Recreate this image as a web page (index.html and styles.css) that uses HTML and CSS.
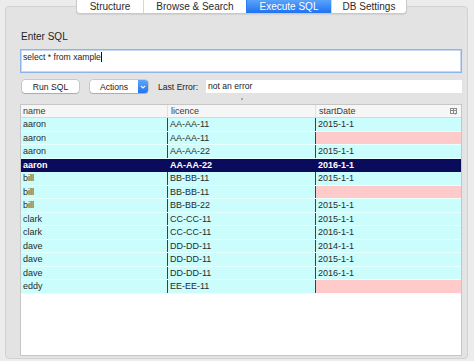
FILE: index.html
```html
<!DOCTYPE html>
<html>
<head>
<meta charset="utf-8">
<link rel="stylesheet" href="styles.css">
</head>
<body>
<div class="tabs">
  <div class="tab t1">Structure</div>
  <div class="tab t2">Browse &amp; Search</div>
  <div class="tab t3 active">Execute SQL</div>
  <div class="tab t4">DB Settings</div>
</div>
<div class="panel">
  <div class="label">Enter SQL</div>
  <div class="editor">select * from xample<span class="caret"></span></div>
  <div class="toolbar">
    <div class="btn run">Run SQL</div>
    <div class="popup"><span class="popup-text">Actions</span><span class="arrow"><svg width="6" height="4" viewBox="0 0 6 4"><path d="M0.8 0.8 L3 3 L5.2 0.8" fill="none" stroke="#fff" stroke-width="1.1"/></svg></span></div>
    <span class="err-label">Last Error:</span>
    <div class="err-field">not an error</div>
  </div>
  <div class="splitter"><span class="grip"></span></div>
  <div class="table">
    <div class="thead">
      <div class="th">name</div>
      <div class="th div">licence</div>
      <div class="th div last">startDate<svg class="colicon" width="7" height="7" viewBox="0 0 7 7"><rect x="0.5" y="0.5" width="6" height="5" fill="none" stroke="#8a8a8a"/><line x1="0.5" y1="2.5" x2="6.5" y2="2.5" stroke="#8a8a8a"/><line x1="3.5" y1="0.5" x2="3.5" y2="5.5" stroke="#8a8a8a"/><path d="M4 5 L5.5 6.8 L7 5 Z" fill="#8a8a8a"/></svg></div>
    </div>
    <div class="row"><div class="td">aaron</div><div class="td div">AA-AA-11</div><div class="td div">2015-1-1</div></div>
    <div class="row"><div class="td">aaron</div><div class="td div">AA-AA-11</div><div class="td div pink"></div></div>
    <div class="row"><div class="td">aaron</div><div class="td div">AA-AA-22</div><div class="td div">2015-1-1</div></div>
    <div class="row sel"><div class="td">aaron</div><div class="td">AA-AA-22</div><div class="td">2016-1-1</div></div>
    <div class="row"><div class="td">bill</div><div class="td div">BB-BB-11</div><div class="td div">2015-1-1</div></div>
    <div class="row"><div class="td">bill</div><div class="td div">BB-BB-11</div><div class="td div pink"></div></div>
    <div class="row"><div class="td">bill</div><div class="td div">BB-BB-22</div><div class="td div">2015-1-1</div></div>
    <div class="row"><div class="td">clark</div><div class="td div">CC-CC-11</div><div class="td div">2015-1-1</div></div>
    <div class="row"><div class="td">clark</div><div class="td div">CC-CC-11</div><div class="td div">2016-1-1</div></div>
    <div class="row"><div class="td">dave</div><div class="td div">DD-DD-11</div><div class="td div">2014-1-1</div></div>
    <div class="row"><div class="td">dave</div><div class="td div">DD-DD-11</div><div class="td div">2015-1-1</div></div>
    <div class="row"><div class="td">dave</div><div class="td div">DD-DD-11</div><div class="td div">2016-1-1</div></div>
    <div class="row"><div class="td">eddy</div><div class="td div">EE-EE-11</div><div class="td div pink"></div></div>
  </div>
</div>
</body>
</html>
```

FILE: styles.css
```css
html, body {
  margin: 0;
  padding: 0;
  width: 474px;
  height: 361px;
  overflow: hidden;
  background: #ececec;
  font-family: "Liberation Sans", Arial, sans-serif;
  color: #262626;
}

.tabs {
  position: relative;
  z-index: 1;
  display: flex;
  width: max-content;
  height: 13px;
  margin-left: 76px;
  background: #fff;
  border: 1px solid #c9c9c9;
  border-top: 0;
  border-radius: 0 0 4px 4px;
  box-shadow: 0 1px 1px rgba(0,0,0,0.08);
  overflow: hidden;
}

.tab {
  display: flex;
  align-items: center;
  justify-content: center;
  font-size: 10px;
  color: #2b2b2b;
  border-left: 1px solid #d6d6d6;
  box-sizing: border-box;
  padding-top: 0;
}
.t1 { width: 66px; border-left: 0; }
.t2 { width: 103px; }
.t3 { width: 85px; }
.t4 { width: 75px; }
.tab.active {
  background: linear-gradient(#5aa3f9, #1f72f2);
  color: #fff;
  border-left-color: #2c7af2;
}

.panel {
  box-sizing: border-box;
  height: 353px;
  margin: -8px 6px 0 5px;
  padding: 24px 5px 0 14px;
  background: #e3e3e3;
  border: 1px solid #d2d2d2;
  border-radius: 4px;
  display: flex;
  flex-direction: column;
}

.label {
  font-size: 10px;
  line-height: 12px;
  height: 12px;
  margin-left: 1px;
  color: #1f1f1f;
}

.editor {
  box-sizing: border-box;
  height: 24px;
  margin-top: 6px;
  padding: 2px 2px;
  background: #fff;
  border: 1px solid #8db5ec;
  box-shadow: inset 0 0 0 1px #c3d8f5;
  font-size: 8.6px;
  line-height: 11px;
  color: #1e1e1e;
}
.caret {
  display: inline-block;
  width: 1px;
  height: 10px;
  background: #111;
  vertical-align: -2px;
}

.toolbar {
  display: flex;
  align-items: center;
  height: 13px;
  margin-top: 7px;
  font-size: 8.6px;
}

.btn {
  box-sizing: border-box;
  height: 13px;
  display: flex;
  align-items: center;
  justify-content: center;
  background: #fff;
  border-radius: 3px;
  box-shadow: 0 0 0 0.5px rgba(0,0,0,0.22), 0 1px 1px rgba(0,0,0,0.15);
  color: #222;
}
.run {
  width: 57px;
  margin-left: 2px;
}

.popup {
  display: flex;
  height: 13px;
  width: 58px;
  margin-left: 11px;
  background: #fff;
  border-radius: 3px;
  box-shadow: 0 0 0 0.5px rgba(0,0,0,0.22), 0 1px 1px rgba(0,0,0,0.15);
}
.popup-text {
  flex: 1;
  display: flex;
  align-items: center;
  justify-content: center;
  color: #222;
  padding-top: 1px;
}
.arrow {
  width: 10px;
  display: flex;
  align-items: center;
  justify-content: center;
  background: linear-gradient(#5ea6fa, #2274f1);
  border-radius: 0 3px 3px 0;
}

.err-label {
  margin-left: 10px;
  width: 48px;
  color: #222;
}
.err-field {
  flex: 1;
  height: 13px;
  line-height: 13px;
  background: #fff;
  padding-left: 2px;
  color: #222;
}

.splitter {
  height: 11px;
  display: flex;
  align-items: center;
  justify-content: center;
}
.grip {
  width: 2px;
  height: 2px;
  background: #a8a8a8;
  margin-left: 2px;
}

.table {
  box-sizing: border-box;
  height: 252px;
  background: #fff;
  border: 1px solid #c6c6c6;
  font-size: 9px;
}

.thead {
  display: grid;
  grid-template-columns: 146px 148px 1fr;
  height: 12px;
  background: #f6f6f6;
  border-bottom: 1px solid #d8d8d8;
}
.th {
  display: flex;
  align-items: center;
  padding-left: 2px;
  color: #3a3a3a;
  line-height: 12px;
}
.th.div {
  border-left: 1px solid #e2e2e2;
  padding-left: 3px;
}
.th.last {
  justify-content: space-between;
  padding-right: 4px;
}

.row {
  display: grid;
  grid-template-columns: 146px 148px 1fr;
  height: 13.5px;
  box-sizing: border-box;
  border-bottom: 1px solid #e6ffff;
  background: #ccfdfd;
}
.td {
  padding-left: 2px;
  line-height: 12.5px;
  color: #2a2a2a;
  white-space: nowrap;
}
.td.div {
  border-left: 1px solid #3f3f3f;
  padding-left: 2px;
}
.td.pink {
  background: #ffcaca;
}
.row.sel {
  background: #0b0b5c;
  border-bottom-color: #0b0b5c;
}
.row.sel .td {
  color: #fff;
  font-weight: bold;
  padding-left: 2px;
}
.row.sel .td + .td {
  padding-left: 3px;
}
```
